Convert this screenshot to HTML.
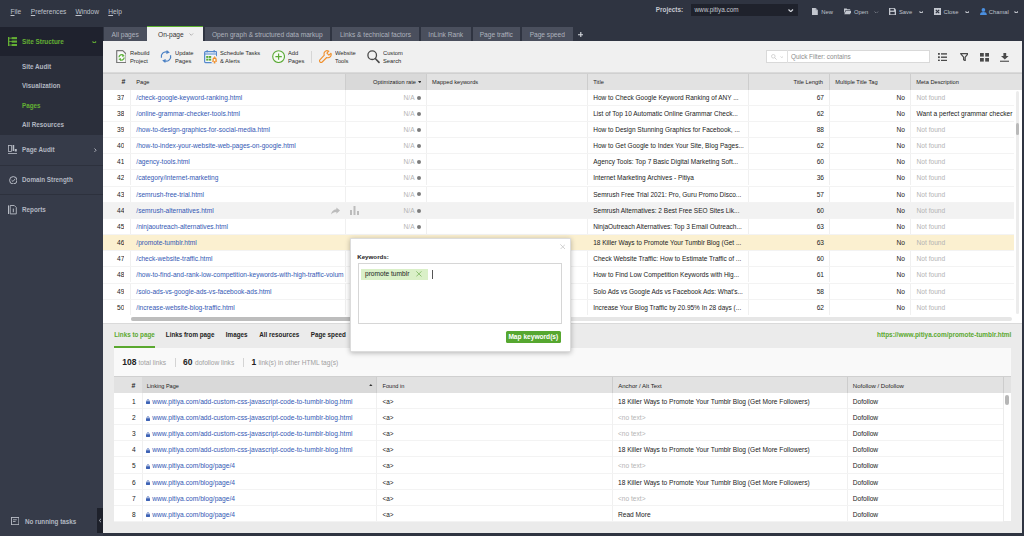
<!DOCTYPE html>
<html><head><meta charset="utf-8"><title>Pages</title>
<style>
*{box-sizing:border-box;margin:0;padding:0}
html,body{width:1024px;height:536px;overflow:hidden;background:#2f3441;font-family:"Liberation Sans",Arial,sans-serif;font-size:6.6px;color:#222}
.a{position:absolute}
.t{position:absolute;white-space:nowrap;line-height:10px;height:10px}
#top{position:absolute;left:0;top:0;width:1024px;height:27px;background:#2f3441}
.m{color:#bfc3cc;font-size:6.6px}
.tr{color:#bfc3cc;font-size:5.8px}
#side{position:absolute;left:0;top:27px;width:103px;height:509px;background:#363b49}
.it{color:#b2b7c1;font-weight:bold;font-size:6.3px;left:22px}
.tab{position:absolute;top:27px;height:14px;background:#4a4f5d;color:#aeb3bd;font-size:6.6px;line-height:15.6px;text-align:center;white-space:nowrap;overflow:hidden}
.tab.act{background:#f0f0f0;color:#333;border-top:1.5px solid #5cb030;top:26px;height:16px;line-height:15px;text-align:left;padding-left:11px}
#main{position:absolute;left:103px;top:41px;width:919px;height:492px;background:#ebebeb}
#tb{position:absolute;left:103px;top:41px;width:919px;height:32px;background:#f0f0f0;border-bottom:1px solid #dadada}
.tbt{font-size:6.1px;line-height:8px;height:auto;color:#2a2a2a;transform:scaleX(.945);transform-origin:0 0}
#th{position:absolute;left:103px;top:73px;width:919px;height:17px;background:#e2e2e2;border-top:1px solid #d0d0d0}
#th span{position:absolute;top:2.6px;line-height:10px;font-size:5.7px;color:#222;white-space:nowrap}
#th i,#th2 i{position:absolute;top:0;width:1px;height:16px;background:#cdcdcd}
.r{position:absolute;left:103px;width:911px;height:16.16px;background:#fff;border-bottom:1px solid #f3f3f3}
.r.hov{background:#f2f2f2}
.r.sel{background:#fbf0d0}
.c{position:absolute;top:0;height:15px;line-height:16px;font-size:6.6px;white-space:nowrap;overflow:hidden;border-left:1px solid #f0f0f0}
.c.num{left:0;width:21.4px;text-align:right;border-left:0}
.c.pg{left:27px;width:215px;color:#3358b4;padding-left:5.3px}
.c.opt{left:242px;width:81px;text-align:right;padding-right:5px}
.c.mk{left:323px;width:161px}
.c.ti{left:484px;width:161px;padding-left:5.2px;color:#222;font-size:6.53px}
.c.tl{left:645px;width:81px;text-align:right;padding-right:5px}
.c.mt{left:726px;width:81px;text-align:right;padding-right:5.2px}
.c.md{left:807px;width:104px;padding-left:5.6px}
.sel .c,.hov .c{border-left-color:transparent}
.nf{color:#b3b3b3}
.na{color:#b3b3b3}
.dot{display:inline-block;width:4px;height:4px;border-radius:50%;background:#7c7c7c;margin-left:2.4px;vertical-align:0.1px}
#bp{position:absolute;left:103px;top:323px;width:919px;height:210px;background:#ebebeb;border-top:1px solid #dadada}
.bt{font-size:6.3px;font-weight:bold;color:#222}
#stats{position:absolute;left:114px;top:348.3px;width:897px;height:28px;background:#f9f9f9}
#stats b{position:absolute;top:9px;line-height:10px;font-size:8.5px;color:#222}
#stats span{position:absolute;top:9.6px;line-height:10px;font-size:6.6px;color:#a0a0a0;white-space:nowrap}
#stats i{position:absolute;top:9.5px;width:1px;height:9px;background:#d4d4d4}
#th2{position:absolute;left:114px;top:376.3px;width:897px;height:16.7px;background:#e2e2e2;border-top:1px solid #d0d0d0}
#th2 span{position:absolute;top:3.6px;line-height:10px;font-size:6px;color:#222;white-space:nowrap}
.r2{position:absolute;left:114px;width:888.5px;height:16.12px;background:#fff;border-bottom:1px solid #f3f3f3}
.d{position:absolute;top:0;height:15.5px;line-height:17.8px;font-size:6.6px;white-space:nowrap;overflow:hidden;border-left:1px solid #f0f0f0}
.d.num{left:0;width:21.6px;text-align:right;border-left:0}
.d.lp{left:28px;width:234px;color:#3358b4;padding-left:3px;font-size:6.69px}
.d.fi{left:262px;width:236px;padding-left:5.5px;font-size:6.4px}
.d.an{left:498px;width:235px;padding-left:5px}
.d.nd{left:733px;width:155.5px;padding-left:4.8px}
.lock{width:4px;height:5px;margin-right:2.2px;vertical-align:-0.4px}
#pop{position:absolute;left:349.5px;top:238px;width:221px;height:113.5px;background:#fff;border:1px solid #dcdcdc;box-shadow:0 1px 5px rgba(0,0,0,.28)}
</style></head><body>
<div id="top"></div><span class="t m" style="left:10.5px;top:7px;"><u>F</u>ile</span><span class="t m" style="left:30.8px;top:7px;"><u>P</u>references</span><span class="t m" style="left:75.5px;top:7px;"><u>W</u>indow</span><span class="t m" style="left:108.3px;top:7px;"><u>H</u>elp</span><span class="t m" style="left:655.8px;top:5px;font-weight:bold;font-size:6.4px;color:#c5c8d0">Projects:</span><div class="a" style="left:690.5px;top:4px;width:107.5px;height:12px;background:#1f222c"></div><span class="t m" style="left:694.5px;top:5px;font-size:6.4px;color:#c5c8d0">www.pitiya.com</span><svg class="a" style="left:788.45px;top:8.700000000000001px;width:5.5px;height:3.2px" viewBox="0 0 5.5 3.2"><path d="M0.5 0.5 L2.75 2.7 L5.0 0.5" fill="none" stroke="#d4d7dd" stroke-width="1.2"/></svg><svg class="a" style="left:812.2px;top:8px;width:5.8px;height:7px" viewBox="0 0 6 7"><path d="M0 0 H3.8 L6 2.2 V7 H0 Z" fill="#c3c7cf"/><path d="M3.8 0 V2.2 H6" fill="#8d929d"/></svg><span class="t tr" style="left:821.3px;top:7.199999999999999px;">New</span><svg class="a" style="left:843.7px;top:8.4px;width:7.6px;height:6.4px" viewBox="0 0 8 6.5"><path d="M0 0.3 H2.8 L3.6 1.2 H6.5 V2.3 H1.6 L0 5.6 Z" fill="#c3c7cf"/><path d="M2 2.9 H8 L6.4 6.5 H0.3 Z" fill="#c3c7cf"/></svg><span class="t tr" style="left:854px;top:7.199999999999999px;">Open</span><svg class="a" style="left:874.3000000000001px;top:10.6px;width:4.6px;height:2.8px" viewBox="0 0 4.6 2.8"><path d="M0.5 0.5 L2.3 2.3 L4.1 0.5" fill="none" stroke="#6f7480" stroke-width="1"/></svg><svg class="a" style="left:889px;top:8.2px;width:7px;height:7px" viewBox="0 0 7 7"><path d="M0 0 H5.6 L7 1.4 V7 H0 Z" fill="#c3c7cf"/><rect x="1.3" y="0.8" width="3.6" height="1.8" fill="#2f3441"/><rect x="1.3" y="3.9" width="4.4" height="2.4" fill="#2f3441"/></svg><span class="t tr" style="left:899px;top:7.199999999999999px;">Save</span><svg class="a" style="left:918.7px;top:10.6px;width:4.6px;height:2.8px" viewBox="0 0 4.6 2.8"><path d="M0.5 0.5 L2.3 2.3 L4.1 0.5" fill="none" stroke="#c9ccd3" stroke-width="1.1"/></svg><svg class="a" style="left:934px;top:8.2px;width:7px;height:7px" viewBox="0 0 7 7"><rect width="7" height="7" fill="#c3c7cf"/><path d="M1.8 1.8 L5.2 5.2 M5.2 1.8 L1.8 5.2" stroke="#2f3441" stroke-width="1.2"/></svg><span class="t tr" style="left:943.6px;top:7.199999999999999px;">Close</span><svg class="a" style="left:964.7px;top:10.6px;width:4.6px;height:2.8px" viewBox="0 0 4.6 2.8"><path d="M0.5 0.5 L2.3 2.3 L4.1 0.5" fill="none" stroke="#c9ccd3" stroke-width="1.1"/></svg><svg class="a" style="left:980px;top:8px;width:6.8px;height:7px" viewBox="0 0 7 7"><circle cx="3.5" cy="1.9" r="1.9" fill="#4a8fe0"/><path d="M0 7 C0 4.6 1.5 4 3.5 4 C5.5 4 7 4.6 7 7 Z" fill="#4a8fe0"/></svg><span class="t tr" style="left:988.8px;top:7.199999999999999px;">Chamal</span><svg class="a" style="left:1013.7px;top:10.6px;width:4.6px;height:2.8px" viewBox="0 0 4.6 2.8"><path d="M0.5 0.5 L2.3 2.3 L4.1 0.5" fill="none" stroke="#c9ccd3" stroke-width="1.1"/></svg>
<div id="side"></div><div class="a" style="left:0;top:27px;width:103px;height:28.5px;background:#1f222e"></div><div class="a" style="left:0;top:55.5px;width:103px;height:79.5px;background:#2b2f3b"></div><svg class="a" style="left:8.1px;top:37px;width:9.2px;height:9.2px" viewBox="0 0 9.2 9.2"><rect x="0" y="0" width="1.3" height="9.2" fill="#64b034"/><rect x="3.7" y="0.1" width="5.5" height="2.1" fill="#64b034"/><rect x="3.7" y="3.55" width="5.5" height="2.1" fill="#64b034"/><rect x="3.7" y="7" width="5.5" height="2.1" fill="#64b034"/><rect x="1" y="0.75" width="3" height="0.8" fill="#64b034"/><rect x="1" y="4.2" width="3" height="0.8" fill="#64b034"/><rect x="1" y="7.65" width="3" height="0.8" fill="#64b034"/></svg><span class="t it" style="left:22px;top:36.7px;color:#64b034;font-size:6.4px">Site Structure</span><svg class="a" style="left:92.4px;top:40.7px;width:4.6px;height:2.8px" viewBox="0 0 4.6 2.8"><path d="M0.5 0.5 L2.3 2.3 L4.1 0.5" fill="none" stroke="#64b034" stroke-width="1.1"/></svg><span class="t it" style="left:22px;top:61.5px;">Site Audit</span><span class="t it" style="left:22px;top:80.8px;">Visualization</span><span class="t it" style="left:22px;top:100.9px;color:#64b034">Pages</span><span class="t it" style="left:22px;top:119.7px;">All Resources</span><svg class="a" style="left:8.4px;top:145px;width:9px;height:9.4px" viewBox="0 0 9 9.4"><rect x="0.4" y="0.4" width="3" height="6" fill="none" stroke="#b9bdc6" stroke-width="0.8"/><rect x="4.6" y="0" width="1.6" height="6" fill="#b9bdc6"/><rect x="6.8" y="4" width="2" height="2.5" fill="#b9bdc6"/><rect x="0" y="8.2" width="9" height="1.2" fill="#b9bdc6"/></svg><span class="t it" style="left:22px;top:144.7px;">Page Audit</span><svg class="a" style="left:94.2px;top:147.6px;width:2.6px;height:4.4px" viewBox="0 0 3 5"><path d="M0.5 0.5 L2.5 2.5 L0.5 4.5" fill="none" stroke="#b9bdc6" stroke-width="1"/></svg><div class="a" style="left:0;top:164.5px;width:103px;height:1px;background:#2d313d"></div><svg class="a" style="left:8.6px;top:175.6px;width:8.6px;height:8.6px" viewBox="0 0 8.6 8.6"><circle cx="4.3" cy="4.3" r="3.7" fill="none" stroke="#b9bdc6" stroke-width="1"/><path d="M2.6 4.2 L4 5.5 L6.2 2.8" fill="none" stroke="#b9bdc6" stroke-width="0.9"/></svg><span class="t it" style="left:22px;top:174.9px;">Domain Strength</span><div class="a" style="left:0;top:194px;width:103px;height:1px;background:#2d313d"></div><svg class="a" style="left:8.4px;top:205.4px;width:8.8px;height:9.4px" viewBox="0 0 8.8 9.4"><rect x="0" y="0.4" width="1" height="8.6" fill="#b9bdc6"/><path d="M2.2 0.5 H6.3 L8.3 2.5 V8.9 H2.2 Z" fill="none" stroke="#b9bdc6" stroke-width="0.9"/><rect x="4.8" y="3.6" width="1" height="3.6" fill="#b9bdc6"/></svg><span class="t it" style="left:22px;top:205px;">Reports</span><svg class="a" style="left:10.9px;top:516.8px;width:8.4px;height:8.2px" viewBox="0 0 8.4 8.2"><rect x="0.5" y="0.5" width="7.4" height="7.2" fill="none" stroke="#b9bdc6" stroke-width="0.9"/><rect x="2" y="2.4" width="3.8" height="0.8" fill="#b9bdc6"/><rect x="2" y="4" width="2.6" height="0.8" fill="#b9bdc6"/></svg><span class="t it" style="left:24.9px;top:516.7px;">No running tasks</span><div class="a" style="left:97px;top:507.5px;width:6.2px;height:25.5px;background:#1e212b"></div><svg class="a" style="left:98.8px;top:517.8px;width:2.6px;height:5px" viewBox="0 0 2.6 5"><path d="M2.2 0.4 L0.5 2.5 L2.2 4.6" fill="none" stroke="#b9bdc6" stroke-width="0.9"/></svg>
<div class="tab" style="left:103.7px;width:42.999999999999986px">All pages</div><div class="tab act" style="left:147px;width:56.19999999999999px">On-page</div><svg class="a" style="left:189.39999999999998px;top:33.2px;width:4.6px;height:2.8px" viewBox="0 0 4.6 2.8"><path d="M0.5 0.5 L2.3 2.3 L4.1 0.5" fill="none" stroke="#b5b5b5" stroke-width="1"/></svg><div class="tab" style="left:204.5px;width:125.69999999999999px">Open graph &amp; structured data markup</div><div class="tab" style="left:332.2px;width:86.5px">Links &amp; technical factors</div><div class="tab" style="left:420.7px;width:50.10000000000002px">InLink Rank</div><div class="tab" style="left:472.9px;width:46.80000000000007px">Page traffic</div><div class="tab" style="left:522px;width:50.5px">Page speed</div><svg class="a" style="left:577.6px;top:31.6px;width:5.6px;height:5.6px" viewBox="0 0 5.6 5.6"><path d="M2.8 0 V5.6 M0 2.8 H5.6" stroke="#d8dbe1" stroke-width="1.1"/></svg>
<div id="main"></div><div id="tb"></div><svg class="a" style="left:115.6px;top:50px;width:10.8px;height:13.4px" viewBox="0 0 10.8 13.4"><path d="M0.7 0.7 H6.8 L10.1 4 V12.7 H0.7 Z" fill="#f9f9f9" stroke="#787878" stroke-width="1.2" stroke-linejoin="round"/><path d="M3 7.2 A2.6 2.6 0 0 1 7.4 5.4" fill="none" stroke="#5fb23c" stroke-width="1.3"/><path d="M6.3 3.9 L8.9 5.9 L6.2 6.9 Z" fill="#5fb23c"/><path d="M8.2 7.6 A2.6 2.6 0 0 1 3.8 9.4" fill="none" stroke="#5fb23c" stroke-width="1.3"/><path d="M4.9 10.9 L2.3 8.9 L5 7.9 Z" fill="#5fb23c"/></svg><span class="t tbt" style="left:130.3px;top:48.6px;top:48.7px">Rebuild<br>Project</span><svg class="a" style="left:160.4px;top:50.4px;width:12px;height:13px" viewBox="0 0 12 13"><path d="M1.46 7.72 A4.7 4.7 0 0 1 7.22 1.96" fill="none" stroke="#4a80c4" stroke-width="1.25"/><path d="M6.7 0 L9.8 2.5 L6.3 4 Z" fill="#4a80c4"/><path d="M10.54 5.28 A4.7 4.7 0 0 1 4.78 11.04" fill="none" stroke="#4a80c4" stroke-width="1.25"/><path d="M5.3 13 L2.2 10.5 L5.7 9 Z" fill="#4a80c4"/></svg><span class="t tbt" style="left:175.3px;top:48.6px;top:48.7px">Update<br>Pages</span><svg class="a" style="left:204px;top:50.3px;width:13.4px;height:13.4px" viewBox="0 0 13.4 13.4"><rect x="0.65" y="1.6" width="12" height="11" rx="0.9" fill="#f4f7fb" stroke="#5588cc" stroke-width="1.2"/><rect x="0.65" y="3.5" width="12" height="1" fill="#5588cc"/><rect x="2.6" y="0" width="1.1" height="2.4" fill="#5588cc"/><rect x="9.6" y="0" width="1.1" height="2.4" fill="#5588cc"/><rect x="2.2" y="6" width="2.3" height="1.9" fill="#5aaa35"/><rect x="5" y="6" width="2.3" height="1.9" fill="#5aaa35"/><rect x="2.2" y="8.7" width="2.3" height="1.9" fill="#5aaa35"/><rect x="5" y="8.7" width="2.3" height="1.9" fill="#5aaa35"/><rect x="7.6" y="6.2" width="6" height="7.4" fill="#f0f0f0"/><path d="M7.9 11.8 L8.5 10.6 V9.3 A2.1 2.1 0 0 1 12.7 9.3 V10.6 L13.3 11.8 Z" fill="#f0902c"/><circle cx="10.6" cy="10" r="1" fill="#fff"/><circle cx="10.6" cy="12.5" r="0.9" fill="#f0902c"/><rect x="10.1" y="6.4" width="1" height="1.2" fill="#f0902c"/></svg><span class="t tbt" style="left:219.9px;top:48.6px;top:48.7px">Schedule Tasks<br>&amp; Alerts</span><svg class="a" style="left:272px;top:50.2px;width:13.2px;height:13.2px" viewBox="0 0 13.2 13.2"><circle cx="6.6" cy="6.6" r="5.9" fill="#f6fbf3" stroke="#5aaa35" stroke-width="1.1"/><path d="M6.6 3.4 V9.8 M3.4 6.6 H9.8" stroke="#5aaa35" stroke-width="1.2"/></svg><span class="t tbt" style="left:288px;top:48.6px;top:48.7px">Add<br>Pages</span><div class="a" style="left:311px;top:50.5px;width:1px;height:12.5px;background:#d6d6d6"></div><svg class="a" style="left:319.2px;top:50px;width:12.8px;height:13px" viewBox="0 0 12.8 13"><path d="M11.9 3.3 L9.9 5.2 L7.9 3.2 L9.8 1.2 C8.4 0.4 6.6 0.7 5.7 1.9 C4.9 2.9 4.9 4.2 5.3 5.2 L0.9 9.8 C0.3 10.5 0.4 11.5 1 12 C1.6 12.6 2.6 12.6 3.2 12 L7.7 7.5 C8.8 7.9 10.2 7.8 11.2 6.8 C12.2 5.8 12.4 4.4 11.9 3.3 Z" fill="none" stroke="#f0902c" stroke-width="1.1" stroke-linejoin="round"/></svg><span class="t tbt" style="left:334.9px;top:48.6px;top:48.7px">Website<br>Tools</span><svg class="a" style="left:366.8px;top:50.4px;width:12.8px;height:13.2px" viewBox="0 0 12.8 13.2"><circle cx="5.2" cy="5.2" r="4.3" fill="none" stroke="#4a4a4a" stroke-width="1.3"/><path d="M8.3 8.5 L12 12.4" stroke="#4a4a4a" stroke-width="1.6" stroke-linecap="round"/></svg><span class="t tbt" style="left:382.5px;top:48.6px;top:48.7px">Custom<br>Search</span><div class="a" style="left:766.4px;top:50.3px;width:163.2px;height:12.6px;background:#fff;border:1px solid #d9d9d9"></div><div class="a" style="left:787px;top:50.3px;width:1px;height:12.6px;background:#e0e0e0"></div><svg class="a" style="left:771px;top:53.6px;width:6px;height:6px" viewBox="0 0 6 6"><circle cx="2.3" cy="2.3" r="1.8" fill="none" stroke="#c4c4c4" stroke-width="0.7"/><path d="M3.6 3.6 L5.6 5.6" stroke="#c4c4c4" stroke-width="0.8"/></svg><svg class="a" style="left:779.9000000000001px;top:55.9px;width:3.6px;height:2.2px" viewBox="0 0 3.6 2.2"><path d="M0.5 0.5 L1.8 1.7000000000000002 L3.1 0.5" fill="none" stroke="#c4c4c4" stroke-width="0.7"/></svg><span class="t " style="left:791px;top:52.4px;color:#8c8c8c;font-size:6.4px">Quick Filter: contains</span><svg class="a" style="left:938.4px;top:53px;width:9px;height:8.4px" viewBox="0 0 9 8.4"><rect x="0" y="0" width="1.8" height="1.8" fill="#4a4a4a"/><rect x="3" y="0.2" width="6" height="1.4" fill="#4a4a4a"/><rect x="0" y="3.3" width="1.8" height="1.8" fill="#4a4a4a"/><rect x="3" y="3.5" width="6" height="1.4" fill="#4a4a4a"/><rect x="0" y="6.6" width="1.8" height="1.8" fill="#4a4a4a"/><rect x="3" y="6.8" width="6" height="1.4" fill="#4a4a4a"/></svg><svg class="a" style="left:959.6px;top:53px;width:8.8px;height:8.4px" viewBox="0 0 8.8 8.4"><path d="M0.6 0.6 H8.2 L5.2 4.2 V7.8 L3.6 6.8 V4.2 Z" fill="none" stroke="#4a4a4a" stroke-width="1.2" stroke-linejoin="round"/></svg><svg class="a" style="left:979.6px;top:53px;width:9px;height:8.6px" viewBox="0 0 9 8.6"><rect x="0" y="0" width="3.8" height="3.6" fill="#4a4a4a"/><rect x="5.2" y="0" width="3.8" height="3.6" fill="#4a4a4a"/><rect x="0" y="5" width="3.8" height="3.6" fill="#4a4a4a"/><rect x="5.2" y="5" width="3.8" height="3.6" fill="#4a4a4a"/></svg><svg class="a" style="left:999.8px;top:52.8px;width:9.6px;height:8.8px" viewBox="0 0 9.6 8.8"><path d="M3.4 0 H6.2 V3 H8.6 L4.8 6.6 L1 3 H3.4 Z" fill="#4a4a4a"/><rect x="0" y="7.7" width="9.6" height="1.1" fill="#4a4a4a"/></svg>
<div class="a" style="left:103px;top:89.5px;width:919px;height:233.5px;background:#fff"></div><div id="th"><span style="left:18.6px;font-weight:bold;font-size:7px">#</span><span style="left:33.2px">Page</span><span style="left:329px">Mapped keywords</span><span style="left:490.3px">Title</span><span style="left:690.5px">Title Length</span><span style="left:732.3px">Multiple Title Tag</span><span style="left:813.2px">Meta Description</span><i style="left:242px"></i><i style="left:323px"></i><i style="left:484px"></i><i style="left:645px"></i><i style="left:726px"></i><i style="left:807px"></i></div><div class="a" style="left:346px;top:74px;width:80px;height:15.5px;background:#d9d9d9;z-index:0"></div><span class="t" style="left:373px;top:76.6px;font-size:5.7px;color:#222">Optimization rate</span><svg class="a" style="left:417.6px;top:80.6px;width:3.6px;height:2.2px" viewBox="0 0 3.6 2.2"><path d="M0 0 H3.6 L1.8 2.2 Z" fill="#333"/></svg>
<div class="r" style="top:89.6px"><span class="c num">37</span><span class="c pg">/check-google-keyword-ranking.html</span><span class="c opt"><span class="na">N/A</span><i class="dot"></i></span><span class="c mk"></span><span class="c ti">How to Check Google Keyword Ranking of ANY ...</span><span class="c tl">67</span><span class="c mt">No</span><span class="c md nf">Not found</span></div>
<div class="r" style="top:105.76px"><span class="c num">38</span><span class="c pg">/online-grammar-checker-tools.html</span><span class="c opt"><span class="na">N/A</span><i class="dot"></i></span><span class="c mk"></span><span class="c ti">List of Top 10 Automatic Online Grammar Check...</span><span class="c tl">62</span><span class="c mt">No</span><span class="c md">Want a perfect grammar checker</span></div>
<div class="r" style="top:121.92px"><span class="c num">39</span><span class="c pg">/how-to-design-graphics-for-social-media.html</span><span class="c opt"><span class="na">N/A</span><i class="dot"></i></span><span class="c mk"></span><span class="c ti">How to Design Stunning Graphics for Facebook, ...</span><span class="c tl">88</span><span class="c mt">No</span><span class="c md nf">Not found</span></div>
<div class="r" style="top:138.08px"><span class="c num">40</span><span class="c pg">/how-to-index-your-website-web-pages-on-google.html</span><span class="c opt"><span class="na">N/A</span><i class="dot"></i></span><span class="c mk"></span><span class="c ti">How to Get Google to Index Your Site, Blog Pages...</span><span class="c tl">62</span><span class="c mt">No</span><span class="c md nf">Not found</span></div>
<div class="r" style="top:154.24px"><span class="c num">41</span><span class="c pg">/agency-tools.html</span><span class="c opt"><span class="na">N/A</span><i class="dot"></i></span><span class="c mk"></span><span class="c ti">Agency Tools: Top 7 Basic Digital Marketing Soft...</span><span class="c tl">60</span><span class="c mt">No</span><span class="c md nf">Not found</span></div>
<div class="r" style="top:170.4px"><span class="c num">42</span><span class="c pg">/category/internet-marketing</span><span class="c opt"><span class="na">N/A</span><i class="dot"></i></span><span class="c mk"></span><span class="c ti">Internet Marketing Archives - Pitiya</span><span class="c tl">36</span><span class="c mt">No</span><span class="c md nf">Not found</span></div>
<div class="r" style="top:186.56px"><span class="c num">43</span><span class="c pg">/semrush-free-trial.html</span><span class="c opt"><span class="na">N/A</span><i class="dot"></i></span><span class="c mk"></span><span class="c ti">Semrush Free Trial 2021: Pro, Guru Promo Disco...</span><span class="c tl">57</span><span class="c mt">No</span><span class="c md nf">Not found</span></div>
<div class="r hov" style="top:202.72px"><span class="c num">44</span><span class="c pg">/semrush-alternatives.html</span><span class="c opt"><span class="na">N/A</span><i class="dot"></i></span><span class="c mk"></span><span class="c ti">Semrush Alternatives: 2 Best Free SEO Sites Lik...</span><span class="c tl">60</span><span class="c mt">No</span><span class="c md nf">Not found</span><svg class="a" style="left:228px;top:4px;width:9px;height:8px" viewBox="0 0 10 8"><path d="M6 0 L10 3.5 L6 7 V5 C3 5 1.5 6 0 8 C0.5 4.5 2.5 2.5 6 2 Z" fill="#bcbcbc"/></svg><svg class="a" style="left:247px;top:3.5px;width:9px;height:9px" viewBox="0 0 9 9"><rect x="0" y="4" width="2" height="5" fill="#bcbcbc"/><rect x="3.5" y="0" width="2" height="9" fill="#bcbcbc"/><rect x="7" y="5" width="2" height="4" fill="#bcbcbc"/></svg></div>
<div class="r" style="top:218.88px"><span class="c num">45</span><span class="c pg">/ninjaoutreach-alternatives.html</span><span class="c opt"><span class="na">N/A</span><i class="dot"></i></span><span class="c mk"></span><span class="c ti">NinjaOutreach Alternatives: Top 3 Email Outreach...</span><span class="c tl">63</span><span class="c mt">No</span><span class="c md nf">Not found</span></div>
<div class="r sel" style="top:235.04px"><span class="c num">46</span><span class="c pg">/promote-tumblr.html</span><span class="c opt"></span><span class="c mk"></span><span class="c ti">18 Killer Ways to Promote Your Tumblr Blog (Get ...</span><span class="c tl">63</span><span class="c mt">No</span><span class="c md nf">Not found</span></div>
<div class="r" style="top:251.2px"><span class="c num">47</span><span class="c pg">/check-website-traffic.html</span><span class="c opt"></span><span class="c mk"></span><span class="c ti">Check Website Traffic: How to Estimate Traffic of ...</span><span class="c tl">60</span><span class="c mt">No</span><span class="c md nf">Not found</span></div>
<div class="r" style="top:267.36px"><span class="c num">48</span><span class="c pg">/how-to-find-and-rank-low-competition-keywords-with-high-traffic-volum</span><span class="c opt"></span><span class="c mk"></span><span class="c ti">How to Find Low Competition Keywords with Hig...</span><span class="c tl">61</span><span class="c mt">No</span><span class="c md nf">Not found</span></div>
<div class="r" style="top:283.52px"><span class="c num">49</span><span class="c pg">/solo-ads-vs-google-ads-vs-facebook-ads.html</span><span class="c opt"></span><span class="c mk"></span><span class="c ti">Solo Ads vs Google Ads vs Facebook Ads: What's...</span><span class="c tl">58</span><span class="c mt">No</span><span class="c md nf">Not found</span></div>
<div class="r" style="top:299.68px;border-bottom-color:#fff"><span class="c num">50</span><span class="c pg">/increase-website-blog-traffic.html</span><span class="c opt"></span><span class="c mk"></span><span class="c ti">Increase Your Blog Traffic by 20.95% In 28 days (...</span><span class="c tl">62</span><span class="c mt">No</span><span class="c md nf">Not found</span></div>
<div class="a" style="left:131.2px;top:317px;width:881.3px;height:3.8px;background:#e6e6e6;border-radius:2px"></div><div class="a" style="left:131.2px;top:317px;width:440px;height:3.8px;background:#bdbdbd;border-radius:2px"></div><div class="a" style="left:1015.6px;top:91px;width:3.8px;height:222.5px;background:#ececec;border-radius:2px"></div><div class="a" style="left:1015.6px;top:122.6px;width:3.8px;height:12.4px;background:#bababa;border-radius:2px"></div><div id="bp"></div><span class="t bt" style="left:114.2px;top:330.3px;color:#5aa82f">Links to page</span><div class="a" style="left:114px;top:345.6px;width:41px;height:2.2px;background:#5aa82f"></div><span class="t bt" style="left:165.8px;top:330.3px;">Links from page</span><span class="t bt" style="left:225.8px;top:330.3px;">Images</span><span class="t bt" style="left:259.3px;top:330.3px;">All resources</span><span class="t bt" style="left:310.8px;top:330.3px;">Page speed</span><span class="t bt" style="left:877px;top:330.2px;color:#5aa82f;font-size:6.43px">https://www.pitiya.com/promote-tumblr.html</span><div id="stats"><b style="left:8.3px">108</b><span style="left:24.5px">total links</span><i style="left:61px"></i><b style="left:69px">60</b><span style="left:81px">dofollow links</span><i style="left:129px"></i><b style="left:137.5px">1</b><span style="left:144.5px">link(s) in other HTML tag(s)</span></div><div id="th2"><div class="a" style="left:28px;top:0;width:234px;height:16px;background:#d9d9d9"></div><span style="left:17.6px;font-weight:bold;font-size:7px">#</span><span style="left:32.8px;font-size:5.55px">Linking Page</span><span style="left:268.5px;font-size:5.65px">Found in</span><span style="left:504.2px;font-size:6.05px">Anchor / Alt Text</span><span style="left:738.8px;font-size:6px">Nofollow / Dofollow</span><i style="left:262px"></i><i style="left:498px"></i><i style="left:733px"></i><i style="left:888.5px"></i><svg class="a" style="left:255px;top:7px;width:3.6px;height:2.2px" viewBox="0 0 3.6 2.2"><path d="M0 2.2 H3.6 L1.8 0 Z" fill="#333"/></svg></div>
<div class="r2" style="top:393.0px"><span class="d num">1</span><span class="d lp"><svg class="lock" viewBox="0 0 8 10"><path d="M2 5 V3.2 a2 2 0 0 1 4 0 V5" fill="none" stroke="#3d62b5" stroke-width="1.5"/><rect x="0" y="4.4" width="8" height="5.6" rx="0.8" fill="#3d62b5"/></svg>www.pitiya.com/add-custom-css-javascript-code-to-tumblr-blog.html</span><span class="d fi">&lt;a&gt;</span><span class="d an">18 Killer Ways to Promote Your Tumblr Blog (Get More Followers)</span><span class="d nd">Dofollow</span></div>
<div class="r2" style="top:409.12px"><span class="d num">2</span><span class="d lp"><svg class="lock" viewBox="0 0 8 10"><path d="M2 5 V3.2 a2 2 0 0 1 4 0 V5" fill="none" stroke="#3d62b5" stroke-width="1.5"/><rect x="0" y="4.4" width="8" height="5.6" rx="0.8" fill="#3d62b5"/></svg>www.pitiya.com/add-custom-css-javascript-code-to-tumblr-blog.html</span><span class="d fi">&lt;a&gt;</span><span class="d an nf">&lt;no text&gt;</span><span class="d nd">Dofollow</span></div>
<div class="r2" style="top:425.24px"><span class="d num">3</span><span class="d lp"><svg class="lock" viewBox="0 0 8 10"><path d="M2 5 V3.2 a2 2 0 0 1 4 0 V5" fill="none" stroke="#3d62b5" stroke-width="1.5"/><rect x="0" y="4.4" width="8" height="5.6" rx="0.8" fill="#3d62b5"/></svg>www.pitiya.com/add-custom-css-javascript-code-to-tumblr-blog.html</span><span class="d fi">&lt;a&gt;</span><span class="d an nf">&lt;no text&gt;</span><span class="d nd">Dofollow</span></div>
<div class="r2" style="top:441.36px"><span class="d num">4</span><span class="d lp"><svg class="lock" viewBox="0 0 8 10"><path d="M2 5 V3.2 a2 2 0 0 1 4 0 V5" fill="none" stroke="#3d62b5" stroke-width="1.5"/><rect x="0" y="4.4" width="8" height="5.6" rx="0.8" fill="#3d62b5"/></svg>www.pitiya.com/add-custom-css-javascript-code-to-tumblr-blog.html</span><span class="d fi">&lt;a&gt;</span><span class="d an">18 Killer Ways to Promote Your Tumblr Blog (Get More Followers)</span><span class="d nd">Dofollow</span></div>
<div class="r2" style="top:457.48px"><span class="d num">5</span><span class="d lp"><svg class="lock" viewBox="0 0 8 10"><path d="M2 5 V3.2 a2 2 0 0 1 4 0 V5" fill="none" stroke="#3d62b5" stroke-width="1.5"/><rect x="0" y="4.4" width="8" height="5.6" rx="0.8" fill="#3d62b5"/></svg>www.pitiya.com/blog/page/4</span><span class="d fi">&lt;a&gt;</span><span class="d an nf">&lt;no text&gt;</span><span class="d nd">Dofollow</span></div>
<div class="r2" style="top:473.6px"><span class="d num">6</span><span class="d lp"><svg class="lock" viewBox="0 0 8 10"><path d="M2 5 V3.2 a2 2 0 0 1 4 0 V5" fill="none" stroke="#3d62b5" stroke-width="1.5"/><rect x="0" y="4.4" width="8" height="5.6" rx="0.8" fill="#3d62b5"/></svg>www.pitiya.com/blog/page/4</span><span class="d fi">&lt;a&gt;</span><span class="d an">18 Killer Ways to Promote Your Tumblr Blog (Get More Followers)</span><span class="d nd">Dofollow</span></div>
<div class="r2" style="top:489.72px"><span class="d num">7</span><span class="d lp"><svg class="lock" viewBox="0 0 8 10"><path d="M2 5 V3.2 a2 2 0 0 1 4 0 V5" fill="none" stroke="#3d62b5" stroke-width="1.5"/><rect x="0" y="4.4" width="8" height="5.6" rx="0.8" fill="#3d62b5"/></svg>www.pitiya.com/blog/page/4</span><span class="d fi">&lt;a&gt;</span><span class="d an nf">&lt;no text&gt;</span><span class="d nd">Dofollow</span></div>
<div class="r2" style="top:505.84px"><span class="d num">8</span><span class="d lp"><svg class="lock" viewBox="0 0 8 10"><path d="M2 5 V3.2 a2 2 0 0 1 4 0 V5" fill="none" stroke="#3d62b5" stroke-width="1.5"/><rect x="0" y="4.4" width="8" height="5.6" rx="0.8" fill="#3d62b5"/></svg>www.pitiya.com/blog/page/4</span><span class="d fi">&lt;a&gt;</span><span class="d an">Read More</span><span class="d nd">Dofollow</span></div>
<div class="a" style="left:1002.5px;top:393px;width:8.5px;height:128px;background:#fff;border-left:1px solid #ececec"></div><div class="a" style="left:1005px;top:394.6px;width:4px;height:10px;background:#b6b6b6;border-radius:2px"></div><div id="pop"><svg class="a" style="left:209.3px;top:4.8px;width:5.6px;height:5.6px" viewBox="0 0 5 5"><path d="M0.3 0.3 L4.7 4.7 M4.7 0.3 L0.3 4.7" stroke="#c4c4c4" stroke-width="0.7"/></svg><span class="t" style="left:6.7px;top:12.6px;font-weight:bold;font-size:6.2px;color:#222">Keywords:</span><div class="a" style="left:7px;top:24.4px;width:204.5px;height:61px;border:1px solid #d6d6d6;background:#fff"></div><div class="a" style="left:10.5px;top:29.6px;width:66.5px;height:11.5px;background:#daf0c8"></div><span class="t" style="left:14.5px;top:30.3px;font-size:6.6px;color:#222">promote tumblr</span><svg class="a" style="left:65.4px;top:32.4px;width:5.8px;height:5.8px" viewBox="0 0 5 5"><path d="M0.3 0.3 L4.7 4.7 M4.7 0.3 L0.3 4.7" stroke="#7ab55c" stroke-width="0.7"/></svg><div class="a" style="left:81px;top:31px;width:0.7px;height:9px;background:#555"></div><div class="a" style="left:155px;top:91.5px;width:55.6px;height:12px;background:#56a730;border-radius:1.5px"></div><span class="t" style="left:155px;top:92.5px;width:55.6px;text-align:center;font-weight:bold;font-size:6.6px;color:#fff">Map keyword(s)</span></div>
</body></html>
